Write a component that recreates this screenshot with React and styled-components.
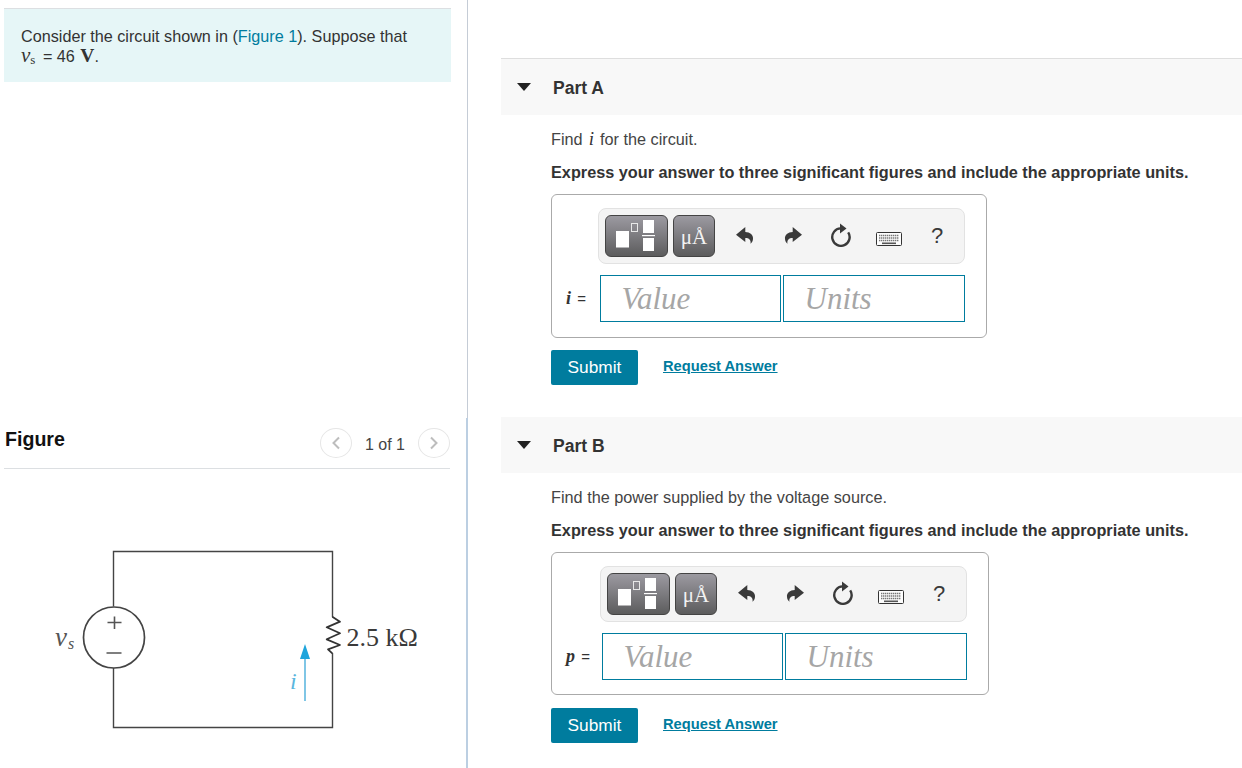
import React from "react";
import styled, { createGlobalStyle } from "styled-components";

const Global = createGlobalStyle`
  html, body { margin: 0; padding: 0; background: #fff; height: 768px; overflow: hidden; }
  body { font-family: "Liberation Sans", Arial, sans-serif; color: #333; }
  #root { height: 768px; }
`;

const Page = styled.div`
  display: flex;
  height: 768px;
  width: 1242px;
`;

const LeftPane = styled.aside`
  width: 466px;
  flex: none;
  padding: 8px 0 0 4px;
  box-sizing: border-box;
  display: flex;
  flex-direction: column;
`;

const Divider = styled.div`
  width: 2px;
  flex: none;
  display: flex;
  flex-direction: column;
  &::before {
    content: "";
    height: 418px;
    width: 1px;
    margin-left: 1px;
    background: #c5ccd6;
  }
  &::after {
    content: "";
    flex: 1;
    background: #bccfe2;
  }
`;

const Intro = styled.div`
  width: 447px;
  height: 74px;
  box-sizing: border-box;
  border-top: 1px solid #dcdfe2;
  background: #e6f6f7;
  padding: 17px 17px 0;
  font-size: 16.2px;
  line-height: 20px;
  color: #333;
`;

const Link = styled.a`
  color: #007c9e;
`;

const MathVar = styled.i`
  font-family: "Liberation Serif", serif;
  font-size: ${(p) => p.$size || 21}px;
  line-height: 0;
  color: #333;
  margin: 0 ${(p) => p.$space || 0}px;
`;

const MathSub = styled.span`
  font-family: "Liberation Serif", serif;
  font-size: 13px;
  line-height: 0;
  position: relative;
  top: 2px;
  margin-right: 3px;
`;

const MathUnit = styled.span`
  font-family: "Liberation Serif", serif;
  font-size: 19.5px;
  font-weight: 700;
  line-height: 0;
  margin-left: 1px;
`;

const FigureHead = styled.div`
  width: 446px;
  height: 52px;
  margin-top: 335px;
  box-sizing: border-box;
  border-bottom: 1px solid #dcdfe2;
  display: flex;
  align-items: flex-start;
`;

const FigureTitle = styled.h2`
  margin: 8px 0 0 1px;
  font-size: 19.6px;
  line-height: 28px;
  font-weight: 700;
  color: #111;
  flex: 1;
`;

const Pager = styled.div`
  display: flex;
  align-items: center;
  gap: 13px;
  font-size: 16px;
  color: #444;
  margin-top: 11px;
`;

const PagerLabel = styled.span`
  padding-top: 3px;
`;

const PagerButton = styled.span`
  width: 32px;
  height: 30px;
  box-sizing: border-box;
  border: 1px solid #e6e6e6;
  border-radius: 50%;
  display: flex;
  align-items: center;
  justify-content: center;
`;

const CircuitFrame = styled.div`
  margin-top: 71px;
  margin-left: 36px;
  width: 380px;
  height: 190px;
`;

const RightPane = styled.main`
  flex: 1;
  padding: 58px 0 0 33px;
  min-width: 0;
`;

const PartHeader = styled.div`
  height: ${(p) => (p.$ruled ? 57 : 56)}px;
  box-sizing: border-box;
  border-top: ${(p) => (p.$ruled ? "1px solid #dedede" : "0")};
  background: #f8f8f8;
  display: flex;
  align-items: center;
  padding-left: 16px;
  gap: 22px;
  margin-top: ${(p) => p.$top || 0}px;
`;

const Caret = styled.span`
  width: 0;
  height: 0;
  border-left: 7px solid transparent;
  border-right: 7px solid transparent;
  border-top: 8px solid #222;
`;

const PartTitle = styled.h3`
  margin: 3px 0 0;
  font-size: 17.5px;
  font-weight: 700;
  color: #333;
`;

const PartBody = styled.section`
  padding: 14px 0 0 50px;
`;

const Question = styled.p`
  margin: 0;
  font-size: 16.25px;
  line-height: 20px;
  color: #444;
`;

const Instruction = styled.p`
  margin: 13px 0 12px;
  font-size: 16.25px;
  line-height: 20px;
  font-weight: 700;
  color: #333;
`;

const AnswerBox = styled.div`
  width: fit-content;
  box-sizing: border-box;
  border: 1px solid #aaa;
  border-radius: 6px;
  padding: 13px 21px ${(p) => p.$bottom}px 0;
`;

const Toolbar = styled.div`
  width: 367px;
  height: 56px;
  box-sizing: border-box;
  margin-left: ${(p) => p.$label - 2}px;
  margin-bottom: 11px;
  background: #f4f4f4;
  border: 1px solid #e2e2e2;
  border-radius: 8px;
  display: flex;
  align-items: center;
  padding-left: 6px;
  gap: 5px;
`;

const TemplateButton = styled.span`
  width: ${(p) => p.$w}px;
  height: 42px;
  flex: none;
  box-sizing: border-box;
  border: 1px solid #444;
  border-radius: 6px;
  background: linear-gradient(#9c9aa1, #5c5c5d);
  display: flex;
  align-items: center;
  justify-content: center;
  color: #f2f2f2;
  font-family: "Liberation Serif", serif;
  font-size: 21px;
  padding-top: 2px;
`;

const ToolSlot = styled.span`
  width: 48px;
  height: 40px;
  flex: none;
  display: flex;
  justify-content: center;
  align-items: center;
  color: #3a3a3a;
  font-size: 22px;
  padding-bottom: ${(p) => p.$lift || 0}px;
  padding-top: ${(p) => p.$drop || 0}px;
  box-sizing: border-box;
`;

const Tools = styled.div`
  display: flex;
  margin-left: 1px;
`;

const AnswerRow = styled.div`
  display: flex;
  align-items: center;
`;

const AnswerLabel = styled.label`
  width: ${(p) => p.$label}px;
  flex: none;
  box-sizing: border-box;
  padding-left: 14px;
  font-size: 15px;
  color: #333;
  white-space: pre;
  word-spacing: 2px;
`;

const LabelVar = styled.i`
  font-family: "Liberation Serif", serif;
  font-size: 18px;
  font-weight: 700;
`;

const Field = styled.input`
  width: ${(p) => p.$w}px;
  height: 47px;
  box-sizing: border-box;
  border: 1px solid #007c9e;
  border-radius: 0;
  outline: none;
  padding: 0 0 0 20.5px;
  margin: 0 ${(p) => p.$gap || 0}px 0 0;
  font-family: "Liberation Serif", serif;
  font-style: italic;
  font-size: 31px;
  background: #fff;
  &::placeholder { color: #a6a6a6; opacity: 1; }
`;

const Actions = styled.div`
  display: flex;
  align-items: center;
  margin-top: ${(p) => p.$top}px;
  gap: 25px;
`;

const Submit = styled.button`
  width: 87px;
  height: 35px;
  border: 0;
  border-radius: 2px;
  background: #007c9e;
  color: #fff;
  font-family: "Liberation Sans", Arial, sans-serif;
  font-size: 17.3px;
  padding: 0;
`;

const RequestLink = styled.a`
  color: #007c9e;
  font-size: 14.7px;
  font-weight: 700;
  text-decoration: underline;
  position: relative;
  top: -2px;
`;

const Chevron = ({ left }) => (
  <svg width="10" height="14" viewBox="0 0 10 14" fill="none" stroke="#bdbdbd" strokeWidth="2">
    <path d={left ? "M8 1.5 2.5 7 8 12.5" : "M2 1.5 7.5 7 2 12.5"} />
  </svg>
);

const TemplatesIcon = () => (
  <svg width="42" height="34" viewBox="1 0 42 34" fill="#fff">
    <rect x="1" y="11" width="13" height="16.5" />
    <rect x="16.5" y="3.5" width="6" height="8" fill="none" stroke="#e8e8e8" />
    <rect x="28" y="0" width="11" height="13" />
    <rect x="27" y="15" width="13" height="1.2" />
    <rect x="28" y="18" width="11" height="13" />
  </svg>
);

const Undo = () => (
  <svg width="18" height="18" viewBox="0 0 18 18" fill="#3a3a3a">
    <path d="M0 7.700 9.300 0V5C14 5 17.500 8 17 12C16.800 14 16 15.700 14.500 16.700C15.200 13 13 11 9.300 11V15Z" />
  </svg>
);

const Redo = () => (
  <svg width="18" height="18" viewBox="0 0 18 18" fill="#3a3a3a">
    <path d="M18 7.700 8.700 0V5C4 5 .5 8 1 12C1.200 14 2 15.700 3.500 16.700C2.800 13 5 11 8.700 11V15Z" />
  </svg>
);

const Reset = () => (
  <svg width="22" height="24" viewBox="0 0 22 24" fill="none">
    <path d="M10.500 5.400A8.700 8.700 0 1 0 18.200 9.300" stroke="#3a3a3a" strokeWidth="2.400" />
    <path d="M10 .5V10.500L16.500 5.500Z" fill="#3a3a3a" />
  </svg>
);

const KeyboardIcon = () => (
  <svg width="26" height="14" viewBox="0 0 26 14" fill="none">
    <rect x="0.5" y="0.5" width="25" height="13" rx="1" fill="#fdfdfd" stroke="#333" />
    <path d="M3 3.500H23M3 6H23M3 8.500H23" stroke="#777" strokeWidth="1.400" strokeDasharray="1.400 .6" />
    <path d="M6 11.300H20" stroke="#555" strokeWidth="1.600" />
  </svg>
);

const Circuit = () => (
  <svg width="380" height="190" viewBox="40 540 380 190" fill="none">
    <path d="M113.500 606.500V551.500H332.500V617M332.500 653V727.500H113.500V668" stroke="#444" strokeWidth="1.400" />
    <circle cx="114" cy="637.500" r="30.500" stroke="#444" strokeWidth="1.700" />
    <path d="M114.500 616.500V629M107.500 622.500H121.500M106.500 653H121.500" stroke="#555" strokeWidth="1.600" />
    <path d="M332.300 616.700 340 621.700 326.700 627.300 340 633.300 326.700 639.300 340 645 328 649.300 332.300 653.300" stroke="#333" strokeWidth="1.800" strokeLinejoin="round" />
    <text x="346.500" y="646" fontFamily="Liberation Serif, serif" fontSize="26" fill="#3a3a3a">2.5 kΩ</text>
    <text x="55" y="646" fontFamily="Liberation Serif, serif" fontStyle="italic" fontSize="27" fill="#555">v</text>
    <text x="68" y="649" fontFamily="Liberation Serif, serif" fontStyle="italic" fontSize="16" fill="#555">s</text>
    <path d="M305 701V655" stroke="#49aedb" strokeWidth="1.400" />
    <path d="M305 644 310 659H300Z" fill="#1fa5dc" />
    <text x="290" y="689" fontFamily="Liberation Serif, serif" fontStyle="italic" fontSize="24" fill="#5ab6de">i</text>
  </svg>
);

const Part = ({ title, ruled, top, question, variable, label, boxBottom, actionsTop }) => (
  <>
    <PartHeader $ruled={ruled} $top={top}>
      <Caret />
      <PartTitle>{title}</PartTitle>
    </PartHeader>
    <PartBody>
      <Question>{question}</Question>
      <Instruction>Express your answer to three significant figures and include the appropriate units.</Instruction>
      <AnswerBox $bottom={boxBottom}>
        <Toolbar $label={label}>
          <TemplateButton $w={63}><TemplatesIcon /></TemplateButton>
          <TemplateButton $w={42}>μÅ</TemplateButton>
          <Tools>
            <ToolSlot $lift={1}><Undo /></ToolSlot>
            <ToolSlot><Redo /></ToolSlot>
            <ToolSlot $lift={2}><Reset /></ToolSlot>
            <ToolSlot $drop={6}><KeyboardIcon /></ToolSlot>
            <ToolSlot>?</ToolSlot>
          </Tools>
        </Toolbar>
        <AnswerRow>
          <AnswerLabel $label={label}><LabelVar>{variable}</LabelVar> =</AnswerLabel>
          <Field $w={181} $gap={2} placeholder="Value" readOnly />
          <Field $w={182} placeholder="Units" readOnly />
        </AnswerRow>
      </AnswerBox>
      <Actions $top={actionsTop}>
        <Submit>Submit</Submit>
        <RequestLink>Request Answer</RequestLink>
      </Actions>
    </PartBody>
  </>
);

export default function App() {
  return (
    <Page>
      <Global />
      <LeftPane>
        <Intro>
          Consider the circuit shown in (<Link>Figure 1</Link>). Suppose that<br />
          <MathVar>v</MathVar><MathSub>s</MathSub> = 46 <MathUnit>V</MathUnit>.
        </Intro>
        <FigureHead>
          <FigureTitle>Figure</FigureTitle>
          <Pager>
            <PagerButton><Chevron left /></PagerButton>
            <PagerLabel>1 of 1</PagerLabel>
            <PagerButton><Chevron /></PagerButton>
          </Pager>
        </FigureHead>
        <CircuitFrame><Circuit /></CircuitFrame>
      </LeftPane>
      <Divider />
      <RightPane>
        <Part
          title="Part A"
          ruled
          label={48}
          variable="i"
          boxBottom={15}
          actionsTop={12}
          question={<>Find <MathVar $size={19} $space={1.5}>i</MathVar> for the circuit.</>}
        />
        <Part
          title="Part B"
          top={32}
          label={50}
          variable="p"
          boxBottom={14}
          actionsTop={13}
          question="Find the power supplied by the voltage source."
        />
      </RightPane>
    </Page>
  );
}
